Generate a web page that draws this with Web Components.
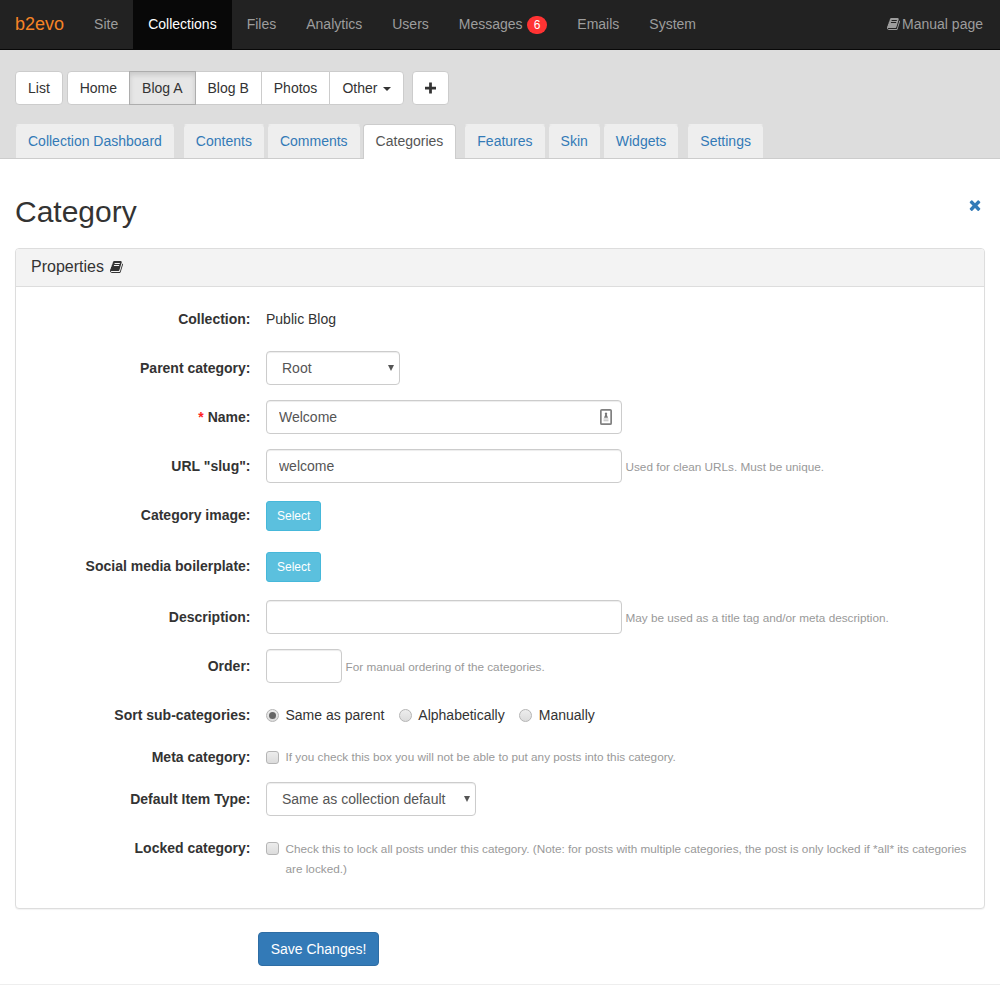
<!DOCTYPE html>
<html lang="en">
<head>
<meta charset="utf-8">
<title>Category</title>
<style>
  html, body { margin: 0; padding: 0; background: #fff; }
  body { font: 14px/20px "Liberation Sans", Arial, sans-serif; color: #333; overflow: hidden; }
</style>
</head>
<body>
<app-navbar>
  <nav-link>Site</nav-link>
  <nav-link active>Collections</nav-link>
  <nav-link>Files</nav-link>
  <nav-link>Analytics</nav-link>
  <nav-link>Users</nav-link>
  <nav-link badge="6">Messages</nav-link>
  <nav-link>Emails</nav-link>
  <nav-link>System</nav-link>
</app-navbar>

<coll-toolbar>
  <div slot="buttons">
    <tool-btn>List</tool-btn>
    <btn-group>
      <tool-btn>Home</tool-btn>
      <tool-btn active>Blog A</tool-btn>
      <tool-btn>Blog B</tool-btn>
      <tool-btn>Photos</tool-btn>
      <tool-btn caret>Other</tool-btn>
    </btn-group>
    <tool-btn plus></tool-btn>
  </div>
  <tab-item slot="tabs" end>Collection Dashboard</tab-item>
  <tab-item slot="tabs">Contents</tab-item>
  <tab-item slot="tabs">Comments</tab-item>
  <tab-item slot="tabs" active end>Categories</tab-item>
  <tab-item slot="tabs">Features</tab-item>
  <tab-item slot="tabs">Skin</tab-item>
  <tab-item slot="tabs" end>Widgets</tab-item>
  <tab-item slot="tabs">Settings</tab-item>
</coll-toolbar>

<page-title>Category</page-title>

<form-panel heading="Properties">
  <form-row label="Collection:"><span>Public Blog</span></form-row>
  <form-row label="Parent category:"><form-select width="134" value="Root"></form-select></form-row>
  <form-row label="Name:" required><text-field width="356" value="Welcome" contact></text-field></form-row>
  <form-row label="URL &quot;slug&quot;:"><text-field width="356" value="welcome"></text-field><field-hint>Used for clean URLs. Must be unique.</field-hint></form-row>
  <form-row label="Category image:"><select-btn>Select</select-btn></form-row>
  <form-row label="Social media boilerplate:"><select-btn>Select</select-btn></form-row>
  <form-row label="Description:"><text-field width="356"></text-field><field-hint>May be used as a title tag and/or meta description.</field-hint></form-row>
  <form-row label="Order:"><text-field width="76"></text-field><field-hint>For manual ordering of the categories.</field-hint></form-row>
  <form-row label="Sort sub-categories:">
    <radio-opt checked>Same as parent</radio-opt>
    <radio-opt>Alphabetically</radio-opt>
    <radio-opt>Manually</radio-opt>
  </form-row>
  <form-row label="Meta category:" flush><check-opt>If you check this box you will not be able to put any posts into this category.</check-opt></form-row>
  <form-row label="Default Item Type:"><form-select width="210" value="Same as collection default"></form-select></form-row>
  <form-row label="Locked category:" top><check-opt multiline>Check this to lock all posts under this category. (Note: for posts with multiple categories, the post is only locked if *all* its categories are locked.)</check-opt></form-row>
</form-panel>

<save-bar>Save Changes!</save-bar>

<script>
const BOOK_PATH = "M1639 478q40 57 18 129l-275 906q-19 64-76.5 107.5t-122.5 43.5h-923q-77 0-148.5-53.5t-99.5-131.5q-24-67-2-127 0-4 3-27t4-37q1-8-3-21.5t-3-19.5q2-11 8-21t16.5-23.5 16.5-23.5q23-38 45-91.5t30-91.5q3-10 .5-30t-.5-28q3-11 17-28t17-23q21-36 42-92t25-90q1-9-2.5-32t.5-28q4-13 22-30.5t22-22.5q19-26 42.5-84.5t27.5-96.5q1-8-3-25.5t-2-26.5q2-8 9-18t18-23 17-21q8-12 16.5-30.5t15-35 16-36 19.5-32 26.5-23.5 36-11.5 47.5 5.5l-1 3q38-9 51-9h761q74 0 114 56t18 130l-274 906q-36 119-71.5 153.5t-128.5 34.5h-869q-27 0-38 15-11 16-1 43 24 70 144 70h923q29 0 56-15.5t35-41.5l300-987q7-22 5-57 38 15 59 43zm-1064 2q-4 13 2 22.5t20 9.5h608q13 0 25.5-9.5t16.5-22.5l21-64q4-13-2-22.5t-20-9.5h-608q-13 0-25.5 9.5t-16.5 22.5zm-83 256q-4 13 2 22.5t20 9.5h608q13 0 25.5-9.5t16.5-22.5l21-64q4-13-2-22.5t-20-9.5h-608q-13 0-25.5 9.5t-16.5 22.5z";
const TIMES_PATH = "M1490 1322q0 40-28 68l-136 136q-28 28-68 28t-68-28l-294-294-294 294q-28 28-68 28t-68-28l-136-136q-28-28-28-68t28-68l294-294-294-294q-28-28-28-68t28-68l136-136q28-28 68-28t68 28l294 294 294-294q28-28 68-28t68 28l136 136q28 28 28 68t-28 68l-294 294 294 294q28 28 28 68z";

const bookIcon = (size) =>
  `<svg width="${size}" height="${size}" viewBox="0 0 1792 1792" fill="currentColor"><path d="${BOOK_PATH}"/></svg>`;

// shadow root + markup, the rest of the classes only supply a template
class ShadowEl extends HTMLElement {
  constructor() {
    super();
    this.attachShadow({ mode: "open" });
  }
  connectedCallback() {
    this.shadowRoot.innerHTML = this.template();
  }
}

class AppNavbar extends ShadowEl {
  template() {
    return `
      <style>
        :host { display: block; }
        nav { display: flex; height: 49px; background: #222; border-bottom: 1px solid #080808; }
        .brand { padding: 0 15px; font-size: 18px; line-height: 49px; color: #f58426; }
        .items { display: flex; flex: 1; }
        .right { display: flex; align-items: center; gap: 1.5px; padding-right: 17px; color: #9d9d9d; line-height: 49px; }
        svg { display: block; margin-top: -1px; }
      </style>
      <nav>
        <span class="brand">b2evo</span>
        <div class="items"><slot></slot></div>
        <span class="right">${bookIcon(14)}Manual page</span>
      </nav>`;
  }
}

class NavLink extends ShadowEl {
  template() {
    const badge = this.getAttribute("badge");
    return `
      <style>
        :host { display: block; }
        a { display: flex; align-items: center; height: 49px; box-sizing: border-box; padding: 0 15px 2px; color: #9d9d9d; }
        :host([active]) a { color: #fff; background: #080808; }
        .badge { margin: 2px 0 0 4px; padding: 3px 7px; border-radius: 10px; background: #f33; color: #fff; font-size: 12px; line-height: 12px; }
      </style>
      <a><slot></slot>${badge ? `<span class="badge">${badge}</span>` : ""}</a>`;
  }
}

class CollToolbar extends ShadowEl {
  template() {
    return `
      <style>
        :host { display: block; background: #ddd; padding: 21px 15px 0; box-sizing: border-box; height: 109px; border-bottom: 1px solid #ccc; }
        .tabs { display: flex; margin-top: 19px; }
      </style>
      <slot name="buttons"></slot>
      <div class="tabs"><slot name="tabs"></slot></div>`;
  }
}

class BtnGroup extends ShadowEl {
  template() {
    return `
      <style>
        :host { display: inline-flex; margin: 0 4px 0 0; vertical-align: top; }
        ::slotted(tool-btn) { margin-left: -1px; --radius: 0; }
        ::slotted(tool-btn:first-child) { margin-left: 0; --radius: 4px 0 0 4px; }
        ::slotted(tool-btn:last-child) { --radius: 0 4px 4px 0; }
      </style>
      <slot></slot>`;
  }
}

class ToolBtn extends ShadowEl {
  template() {
    const caret = this.hasAttribute("caret") ? `<i class="caret"></i>` : "";
    const plus = this.hasAttribute("plus")
      ? `<svg width="12" height="12" viewBox="0 0 12 12"><path fill="#333" d="M4.5 0h3v4.5H12v3H7.5V12h-3V7.5H0v-3h4.5z"/></svg>`
      : "";
    return `
      <style>
        :host { display: inline-block; vertical-align: top; position: relative; }
        :host([active]) { z-index: 1; }
        button { display: flex; align-items: center; height: 34px; margin: 0; padding: 6px 12px; box-sizing: border-box; font: inherit; color: #333; background: #fff; border: 1px solid #ccc; border-radius: var(--radius, 4px); }
        :host([active]) button { background: #e6e6e6; border-color: #adadad; box-shadow: inset 0 3px 5px rgba(0,0,0,.125); }
        :host([plus]) button { padding: 6px 12px; width: 37px; }
        .caret { display: inline-block; width: 0; height: 0; margin: 2px 0 0 6px; border-top: 4px solid #333; border-left: 4px solid transparent; border-right: 4px solid transparent; }
      </style>
      <button type="button"><slot></slot>${caret}${plus}</button>`;
  }
}

class TabItem extends ShadowEl {
  template() {
    return `
      <style>
        :host { display: block; margin: 0 2px -1px 0; }
        :host([end]) { margin-right: 8px; }
        a { display: block; height: 34px; box-sizing: border-box; padding: 6px 12px; color: #337ab7; background: #eee padding-box; border: 1px solid #ddd; border-top-color: #eee; border-bottom: 0; border-radius: 4px 4px 0 0; }
        :host([active]) a { height: 35px; background: #fff; color: #555; border-color: #ccc; }
      </style>
      <a><slot></slot></a>`;
  }
}

class PageTitle extends ShadowEl {
  template() {
    return `
      <style>
        :host { display: flex; justify-content: space-between; padding: 36px 15px 0; height: 53px; }
        h1 { margin: 0; font-size: 30px; font-weight: 500; line-height: 33px; color: #333; }
        svg { margin: 2px 2px 0 0; display: block; }
      </style>
      <h1><slot></slot></h1>
      <svg width="16" height="16" viewBox="0 0 1792 1792" fill="#337ab7"><path d="${TIMES_PATH}"/></svg>`;
  }
}

class FormPanel extends ShadowEl {
  template() {
    return `
      <style>
        :host { display: block; margin: 0 15px; background: #fff; border: 1px solid #ddd; border-radius: 4px; box-shadow: 0 1px 1px rgba(0,0,0,.05); }
        header { display: flex; align-items: center; gap: 6px; padding: 9px 15px 11px; font-size: 16px; line-height: 17px; color: #333; background: #f3f3f3; border-bottom: 1px solid #ddd; border-radius: 3px 3px 0 0; }
        .body { padding: 15px 0 14px; }
      </style>
      <header>${this.getAttribute("heading")} ${bookIcon(14)}</header>
      <div class="body"><slot></slot></div>`;
  }
}

class FormRow extends ShadowEl {
  template() {
    return `
      <style>
        :host { display: flex; gap: 15.5px; margin-bottom: 15px; min-height: 34px; }
        :host([flush]) { min-height: 20px; }
        label { flex: 0 0 234.5px; padding-top: 7px; text-align: right; font-weight: 700; color: #333; }
        :host([flush]) label { padding-top: 0; }
        .ctl { flex: 1; display: flex; align-items: center; min-width: 0; padding-right: 10px; }
        :host([top]) .ctl { align-items: flex-start; }
        .req { color: #f22; }
      </style>
      <label>${this.hasAttribute("required") ? `<span class="req">*</span> ` : ""}${this.getAttribute("label")}</label>
      <div class="ctl"><slot></slot></div>`;
  }
}

class FormSelect extends ShadowEl {
  template() {
    return `
      <style>
        :host { display: block; position: relative; }
        select { display: block; appearance: none; height: 34px; padding: 6px 12px 6px 15px; box-sizing: border-box; font: inherit; color: #555; background: #fff; border: 1px solid #ccc; border-radius: 4px; box-shadow: inset 0 1px 1px rgba(0,0,0,.075); width: ${this.getAttribute("width")}px; }
        .arrow { position: absolute; right: 6px; top: 14px; width: 0; height: 0; border-top: 6px solid #555; border-left: 3px solid transparent; border-right: 3px solid transparent; pointer-events: none; }
      </style>
      <select><option>${this.getAttribute("value")}</option></select><i class="arrow"></i>`;
  }
}

class TextField extends ShadowEl {
  template() {
    const contact = this.hasAttribute("contact")
      ? `<svg width="12" height="16" viewBox="0 0 12 16"><rect x=".85" y=".85" width="10.3" height="14.3" rx="1" fill="#fff" stroke="#808080" stroke-width="1.7"/><path fill="#777" d="M6 3.6a1.2 1.2 0 0 1 .8 2.1L8 8.8H4l1.2-3.1A1.2 1.2 0 0 1 6 3.6z"/><path fill="#bbb" d="M3.5 9.6h5v1h-5zM3.5 11.2h5v1h-5z"/></svg>`
      : "";
    return `
      <style>
        :host { display: block; position: relative; flex: none; }
        input { display: block; width: ${this.getAttribute("width")}px; height: 34px; padding: 6px 12px; box-sizing: border-box; font: inherit; color: #555; background: #fff; border: 1px solid #ccc; border-radius: 4px; box-shadow: inset 0 1px 1px rgba(0,0,0,.075); }
        svg { position: absolute; right: 10px; top: 9px; }
      </style>
      <input type="text" value="${this.getAttribute("value") || ""}">${contact}`;
  }
}

class FieldHint extends ShadowEl {
  template() {
    return `
      <style>
        :host { display: block; margin: 2px 0 0 3.5px; font-size: 11.75px; color: #999; }
      </style>
      <slot></slot>`;
  }
}

class SelectBtn extends ShadowEl {
  template() {
    return `
      <style>
        :host { display: block; padding: 3px 0; }
        button { display: block; height: 30px; padding: 5px 10px; box-sizing: border-box; font: 12px/18px "Liberation Sans", Arial, sans-serif; color: #fff; background: #5bc0de; border: 1px solid #46b8da; border-radius: 3px; }
      </style>
      <button type="button"><slot></slot></button>`;
  }
}

class RadioOpt extends ShadowEl {
  template() {
    return `
      <style>
        :host { display: flex; align-items: center; margin-right: 14.5px; }
        i { position: relative; flex: none; width: 13px; height: 13px; margin-right: 6.5px; box-sizing: border-box; border: 1px solid #b5b5b5; border-radius: 50%; background: linear-gradient(#ededed, #dcdcdc); }
        :host([checked]) i::after { content: ""; position: absolute; left: 2px; top: 2px; width: 7px; height: 7px; border-radius: 50%; background: #666; }
      </style>
      <i></i><span><slot></slot></span>`;
  }
}

class CheckOpt extends ShadowEl {
  template() {
    return `
      <style>
        :host { display: flex; align-items: center; font-size: 11.75px; color: #999; }
        :host([multiline]) { align-items: flex-start; padding-top: 8px; }
        i { flex: none; width: 13px; height: 13px; margin-right: 6.5px; box-sizing: border-box; border: 1px solid #b5b5b5; border-radius: 3px; background: linear-gradient(#ededed, #dcdcdc); }
        :host([multiline]) i { margin-top: 3px; }
      </style>
      <i></i><span><slot></slot></span>`;
  }
}

class SaveBar extends ShadowEl {
  template() {
    return `
      <style>
        :host { display: block; margin-top: 23px; padding: 0 0 18px 258px; border-bottom: 1px solid #eee; }
        button { display: block; width: 121px; height: 34px; padding: 6px 0; box-sizing: border-box; font: inherit; color: #fff; background: #337ab7; border: 1px solid #2e6da4; border-radius: 4px; }
      </style>
      <button type="button"><slot></slot></button>`;
  }
}

customElements.define("app-navbar", AppNavbar);
customElements.define("nav-link", NavLink);
customElements.define("coll-toolbar", CollToolbar);
customElements.define("btn-group", BtnGroup);
customElements.define("tool-btn", ToolBtn);
customElements.define("tab-item", TabItem);
customElements.define("page-title", PageTitle);
customElements.define("form-panel", FormPanel);
customElements.define("form-row", FormRow);
customElements.define("form-select", FormSelect);
customElements.define("text-field", TextField);
customElements.define("field-hint", FieldHint);
customElements.define("select-btn", SelectBtn);
customElements.define("radio-opt", RadioOpt);
customElements.define("check-opt", CheckOpt);
customElements.define("save-bar", SaveBar);
</script>
</body>
</html>
